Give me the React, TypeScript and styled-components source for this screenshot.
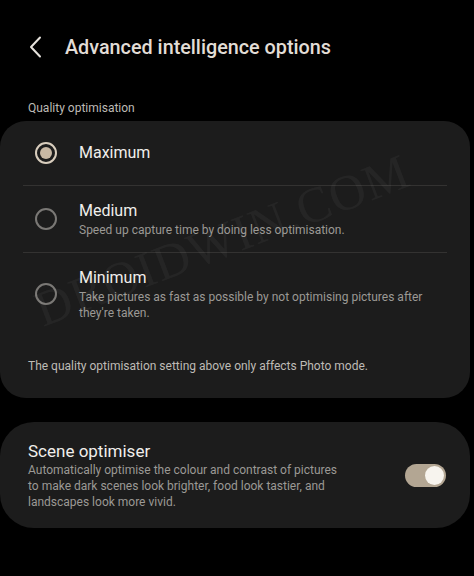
import React from 'react';
import styled, { createGlobalStyle } from 'styled-components';

const GlobalStyle = createGlobalStyle`
    html, body {
        margin: 0;
        padding: 0;
        background: #000;
    }
    body {
        font-family: Roboto, "Noto Sans", sans-serif;
        -webkit-font-smoothing: antialiased;
    }
`;

const Screen = styled.div`
    width: 474px;
    height: 576px;
    background: #000;
    overflow: hidden;
    position: relative;
    display: flex;
    flex-direction: column;
`;

const Header = styled.div`
    display: flex;
    align-items: center;
    height: 46px;
    margin-top: 24px;
    padding-left: 28px;
`;

const BackButton = styled.div`
    width: 16px;
    height: 24px;
    display: flex;
    align-items: center;
    margin-right: 21px;
`;

const Title = styled.h1`
    margin: 0;
    font-size: 19.8px;
    font-weight: 500;
    color: #e2ddd6;
`;

const SectionLabel = styled.div`
    font-size: 12px;
    color: #bdbab5;
    padding: 0 28px;
    margin-top: 31px;
    margin-bottom: 6px;
`;

const Card = styled.div<{ $radius: number }>`
    background: #1c1c1c;
    border-radius: ${p => p.$radius}px;
    margin-right: 4px;
`;

const SceneCard = styled(Card)`
    margin-top: 24px;
    height: 106px;
    display: flex;
    align-items: center;
    padding: 0 24px 0 28px;
`;

const OptionRow = styled.div<{ $height: number }>`
    display: flex;
    align-items: center;
    min-height: ${p => p.$height}px;
    padding: 0 23px 0 35px;
`;

const Divider = styled.div`
    height: 1px;
    background: #333231;
    margin: 0 23px;
`;

const Radio = styled.div<{ $checked?: boolean }>`
    flex: none;
    width: 22px;
    height: 22px;
    box-sizing: border-box;
    border-radius: 50%;
    border: 2px solid ${p => (p.$checked ? '#d8cdbd' : '#7a7875')};
    display: flex;
    align-items: center;
    justify-content: center;
    margin-right: 22px;

    &::after {
        content: '';
        display: ${p => (p.$checked ? 'block' : 'none')};
        width: 12px;
        height: 12px;
        border-radius: 50%;
        background: #c8b8a4;
    }
`;

const OptionText = styled.div`
    display: flex;
    flex-direction: column;
`;

const OptionTitle = styled.div`
    font-size: 16px;
    color: #f0eeeb;
    line-height: 20px;
`;

const OptionDesc = styled.div`
    font-size: 12px;
    color: #9b9995;
    line-height: 16px;
    margin-top: 1px;
`;

const FootNote = styled.div`
    font-size: 12px;
    color: #bebbb6;
    padding: 0 28px 25px;
    margin-top: 24px;
`;

const SceneText = styled.div`
    flex: 1;
    display: flex;
    flex-direction: column;
`;

const SceneTitle = styled.div`
    font-size: 17px;
    color: #f0eeeb;
    line-height: 20px;
`;

const SceneDesc = styled.div`
    font-size: 12px;
    color: #9b9995;
    line-height: 16px;
    margin-top: 1px;
    max-width: 315px;
`;

const Toggle = styled.div<{ $on?: boolean }>`
    flex: none;
    width: 41px;
    height: 23px;
    border-radius: 12px;
    background: ${p => (p.$on ? '#b3a693' : '#555')};
    position: relative;

    &::after {
        content: '';
        position: absolute;
        top: 2px;
        right: ${p => (p.$on ? '2px' : 'auto')};
        left: ${p => (p.$on ? 'auto' : '2px')};
        width: 19px;
        height: 19px;
        border-radius: 50%;
        background: #f7f4ee;
    }
`;

// faint site stamp laid diagonally over the list
const Watermark = styled.div`
    position: absolute;
    left: 222px;
    top: 240px;
    transform: translate(-50%, -50%) rotate(-21deg);
    font-family: "Liberation Serif", serif;
    font-size: 50px;
    letter-spacing: 1px;
    color: rgba(255, 255, 255, 0.045);
    white-space: nowrap;
    pointer-events: none;
`;

const ChevronLeft = () => (
    <svg width="14" height="22" viewBox="0 0 14 22" fill="none">
        <path d="M12 1.5L3 11l9 9.5" stroke="#e6e2dc" strokeWidth="2" strokeLinecap="round" strokeLinejoin="round" />
    </svg>
);

const options = [
    { title: 'Maximum', desc: '', checked: true, height: 64 },
    { title: 'Medium', desc: 'Speed up capture time by doing less optimisation.', checked: false, height: 66 },
    {
        title: 'Minimum',
        desc: "Take pictures as fast as possible by not optimising pictures after they're taken.",
        checked: false,
        height: 82,
    },
];

const App: React.FunctionComponent = () => (
    <Screen>
        <GlobalStyle />
        <Header>
            <BackButton>
                <ChevronLeft />
            </BackButton>
            <Title>Advanced intelligence options</Title>
        </Header>
        <SectionLabel>Quality optimisation</SectionLabel>
        <Card $radius={26}>
            {options.map((option, i) => (
                <React.Fragment key={option.title}>
                    {i > 0 && <Divider />}
                    <OptionRow $height={option.height}>
                        <Radio $checked={option.checked} />
                        <OptionText>
                            <OptionTitle>{option.title}</OptionTitle>
                            {option.desc && <OptionDesc>{option.desc}</OptionDesc>}
                        </OptionText>
                    </OptionRow>
                </React.Fragment>
            ))}
            <FootNote>The quality optimisation setting above only affects Photo mode.</FootNote>
        </Card>
        <SceneCard $radius={34}>
            <SceneText>
                <SceneTitle>Scene optimiser</SceneTitle>
                <SceneDesc>
                    Automatically optimise the colour and contrast of pictures to make dark scenes look brighter,
                    food look tastier, and landscapes look more vivid.
                </SceneDesc>
            </SceneText>
            <Toggle $on />
        </SceneCard>
        <Watermark>DROIDWIN.COM</Watermark>
    </Screen>
);

export default App;
